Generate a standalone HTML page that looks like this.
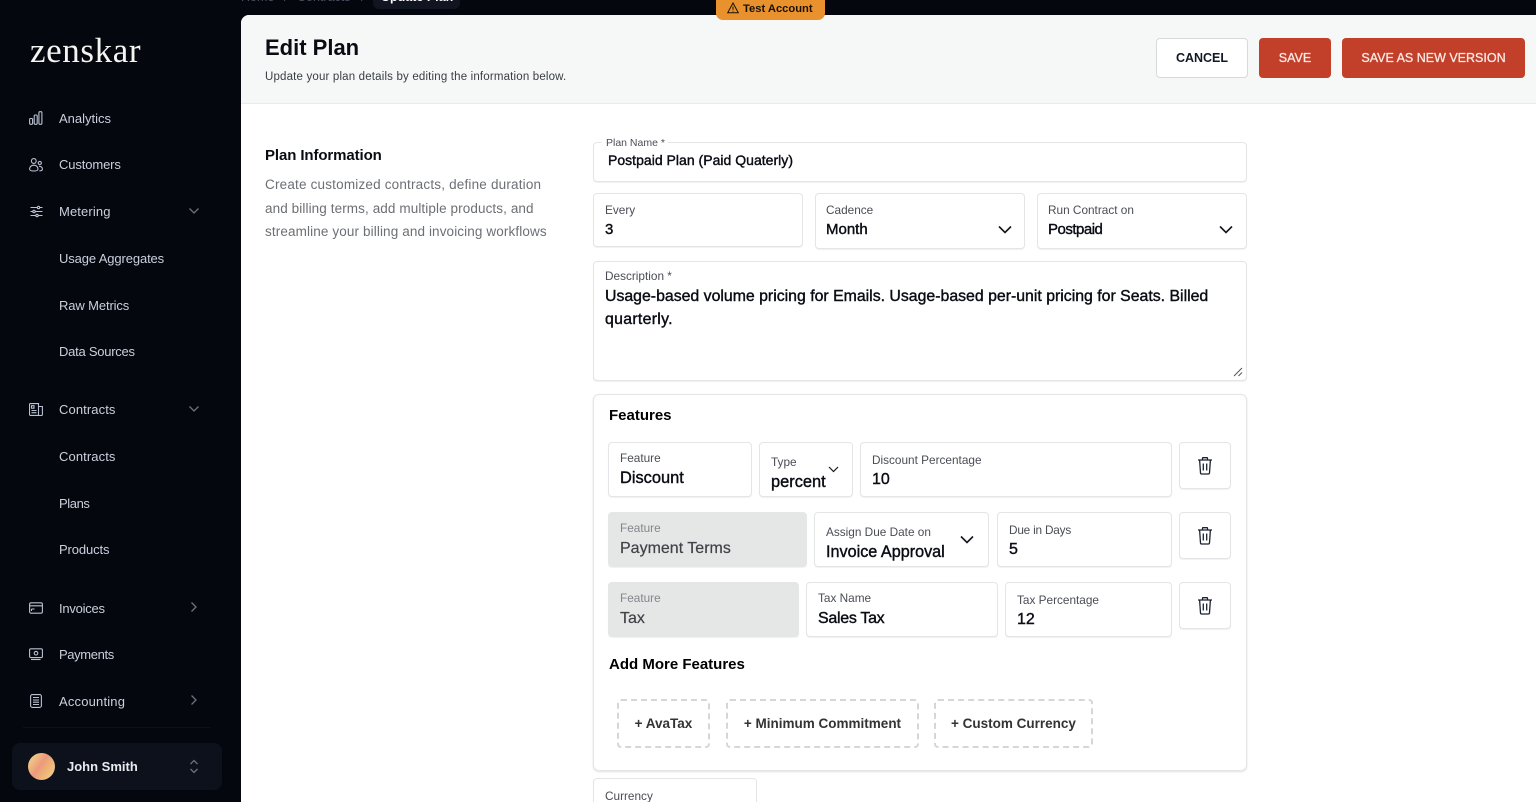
<!DOCTYPE html>
<html lang="en"><head><meta charset="utf-8"><title>Edit Plan</title>
<style>
*{box-sizing:border-box;margin:0;padding:0}
html,body{width:1536px;height:802px;overflow:hidden;background:#05070f;font-family:"Liberation Sans",sans-serif}
#r{position:relative;width:1536px;height:802px;overflow:hidden}
.a{position:absolute}
.t{position:absolute;white-space:nowrap;line-height:20px;height:20px}
.n{color:#c9d0dc;font-size:13px;letter-spacing:-.12px}
.l{color:#4a4d55;font-size:11.800px;letter-spacing:0}
.v{color:#0a0c14;font-size:15px;-webkit-text-stroke:.4px #0a0c14}
.b{position:absolute;background:#fff;border:1.500px solid #e3e5e6;border-radius:4px;box-shadow:0 1px 1px rgba(0,0,0,.06)}
.g{background:#e5e7e7;border-color:#e5e7e7}
.h{color:#000;font-size:15px;font-weight:bold}
.d{position:absolute;border:2.500px dashed #d6d6d6;border-radius:4px;height:49px;top:699px}
.dt{color:#333;font-size:13.500px;font-weight:bold}
svg{position:absolute;fill:none}
.i{stroke:#b9c2d0;stroke-width:1.100}
.c{stroke:#6b7280;stroke-width:1.300}
.k{stroke:#14161d;stroke-width:1.600}
.tr{stroke:#1c2230;stroke-width:1.300}
</style></head><body><div id="r">

<div class="t" style="left:30px;top:36px;height:30px;line-height:30px;font-family:'Liberation Serif',serif;font-size:35px;color:#f4f4f1;letter-spacing:.6px">zenskar</div>

<svg class="i" style="left:29px;top:111px" width="14" height="14" viewBox="0 0 14 14"><rect x=".6" y="7.500" width="3" height="5.800" rx="1"/><rect x="5.200" y="4" width="3" height="9.300" rx="1"/><rect x="9.900" y=".7" width="3" height="12.600" rx="1"/></svg>
<div class="t n" style="left:59px;top:109px;letter-spacing:0">Analytics</div>

<svg class="i" style="left:29px;top:158px" width="14" height="14" viewBox="0 0 14 14"><circle cx="4.800" cy="3" r="2.400"/><circle cx="10.800" cy="5" r="1.600"/><path d="M.6 11c0-2.400 2-3.800 4.200-3.800S9 8.600 9 11c0 1.500-1 2-4.200 2S.6 12.500.6 11zM10 8.300c2 0 3.400 1 3.400 2.800 0 1.200-1 1.700-3 1.700"/></svg>
<div class="t n" style="left:59px;top:155px">Customers</div>

<svg class="i" style="left:30px;top:205px" width="13" height="13" viewBox="0 0 13 13"><path d="M.5 2.500h12M.5 6.500h12M.5 10.500h12"/><circle cx="8.500" cy="2.500" r="1.200" fill="#05070f"/><circle cx="4" cy="6.500" r="1.200" fill="#05070f"/><circle cx="7" cy="10.500" r="1.200" fill="#05070f"/></svg>
<div class="t n" style="left:59px;top:202px;letter-spacing:.12px">Metering</div>
<svg class="c" style="left:189px;top:208px" width="10" height="6" viewBox="0 0 10 6"><path d="M.5.500 5 5 9.500.500"/></svg>

<div class="t n" style="left:59px;top:249px">Usage Aggregates</div>
<div class="t n" style="left:59px;top:296px">Raw Metrics</div>
<div class="t n" style="left:59px;top:342px;letter-spacing:-.25px">Data Sources</div>

<svg class="i" style="left:29px;top:403px" width="14" height="13" viewBox="0 0 14 13"><path d="M1.500.6h8v11.800h-8a1 1 0 0 1-1-1V1.600a1 1 0 0 1 1-1zM9.500 3.500h3.900v8a1 1 0 0 1-1 1H9.500M2.500 7.500h5M2.500 9.700h5"/><rect x="2.500" y="2.700" width="2.500" height="2.500"/></svg>
<div class="t n" style="left:59px;top:400px;letter-spacing:.1px">Contracts</div>
<svg class="c" style="left:189px;top:406px" width="10" height="6" viewBox="0 0 10 6"><path d="M.5.500 5 5 9.500.500"/></svg>

<div class="t n" style="left:59px;top:447px;letter-spacing:.1px">Contracts</div>
<div class="t n" style="left:59px;top:494px;letter-spacing:-.4px">Plans</div>
<div class="t n" style="left:59px;top:540px">Products</div>

<svg class="i" style="left:29px;top:602px" width="14" height="12" viewBox="0 0 14 12"><rect x=".6" y=".8" width="12.800" height="10.400" rx="1.500"/><path d="M.6 3.800h12.800M2.500 7h3M2.500 7v2"/></svg>
<div class="t n" style="left:59px;top:599px;letter-spacing:-.25px">Invoices</div>
<svg class="c" style="left:191px;top:602px" width="6" height="10" viewBox="0 0 6 10"><path d="M.5.500 5 5 .5 9.500"/></svg>

<svg class="i" style="left:29px;top:648px" width="14" height="13" viewBox="0 0 14 13"><rect x=".6" y=".8" width="12.800" height="8.800" rx="1.200"/><circle cx="7" cy="5.200" r="1.800"/><path d="M2 11.500h9.500"/></svg>
<div class="t n" style="left:59px;top:645px;letter-spacing:-.37px">Payments</div>

<svg class="i" style="left:30px;top:694px" width="12" height="14" viewBox="0 0 12 14"><rect x=".6" y=".6" width="10.800" height="12.800" rx="1.800"/><path d="M3 3.500h6M3 6h6M3 8.200h6M3 10.500h6"/></svg>
<div class="t n" style="left:59px;top:692px;letter-spacing:.18px">Accounting</div>
<svg class="c" style="left:191px;top:695px" width="6" height="10" viewBox="0 0 6 10"><path d="M.5.500 5 5 .5 9.500"/></svg>

<div class="a" style="left:23px;top:727px;width:188px;height:1px;background:#0d1119"></div>
<div class="a" style="left:12px;top:743px;width:210px;height:47px;background:#0c111c;border-radius:8px"></div>
<div class="a" style="left:28px;top:753px;width:27px;height:27px;border-radius:50%;background:linear-gradient(125deg,#f3d887 5%,#ec9a7c 45%,#eeb276 65%,#f2d08a 95%)"></div>
<div class="t" style="left:67px;top:757px;color:#e9ebef;font-size:13px;font-weight:bold">John Smith</div>
<svg class="c" style="left:189px;top:759px" width="10" height="15" viewBox="0 0 10 15"><path d="M1.500 5 5 1.500 8.500 5M1.500 10 5 13.500 8.500 10"/></svg>

<div class="t" style="left:241px;top:-13px;font-size:12.500px;color:#4a5060">Home</div>
<div class="t" style="left:284px;top:-13px;font-size:12.500px;color:#4a5060">/</div>
<div class="t" style="left:297px;top:-13px;font-size:12.500px;color:#4a5060">Contracts</div>
<div class="t" style="left:361px;top:-13px;font-size:12.500px;color:#4a5060">/</div>
<div class="a" style="left:373px;top:-10px;width:87px;height:19px;background:#101521;border-radius:6px"></div>
<div class="t" style="left:381px;top:-13px;font-size:12.500px;color:#fff;font-weight:bold">Update Plan</div>

<div class="a" style="left:241px;top:15px;width:1295px;height:787px;background:#fff;border-radius:8px 0 0 0"></div>
<div class="a" style="left:241px;top:15px;width:1295px;height:89px;background:#f5f8f7;border-bottom:1px solid #e9ebeb;border-radius:8px 0 0 0"></div>

<div class="a" style="left:716px;top:0;width:109px;height:20px;background:#e8912d;border-radius:0 0 7px 7px"></div>
<svg style="left:727px;top:2px;stroke:#1a1206;stroke-width:1" width="12" height="12" viewBox="0 0 12 12"><path d="M6 1 11.300 10.800H.7zM6 4.500v3.300M6 8.800v.8"/></svg>
<div class="t" style="left:743px;top:-1px;font-size:11.200px;font-weight:bold;color:#1a1206">Test Account</div>

<div class="t" style="left:265px;top:33px;height:30px;line-height:30px;font-size:22px;font-weight:bold;color:#0a0c14">Edit Plan</div>
<div class="t" style="left:265px;top:67px;font-size:11.500px;color:#3a3d45;letter-spacing:.17px">Update your plan details by editing the information below.</div>

<div class="a" style="left:1156px;top:38px;width:92px;height:40px;background:#fff;border:1px solid #d6dadc;border-radius:4px"></div>
<div class="t" style="left:1156px;width:92px;text-align:center;top:48px;font-size:12.500px;font-weight:bold;color:#111827">CANCEL</div>
<div class="a" style="left:1259px;top:38px;width:72px;height:40px;background:#c23f2a;border-radius:4px"></div>
<div class="t" style="left:1259px;width:72px;text-align:center;top:48px;font-size:12.500px;color:#fbe9e4;-webkit-text-stroke:.3px #fbe9e4">SAVE</div>
<div class="a" style="left:1342px;top:38px;width:183px;height:40px;background:#c23f2a;border-radius:4px"></div>
<div class="t" style="left:1342px;width:183px;text-align:center;top:48px;font-size:12.500px;color:#fbe9e4;-webkit-text-stroke:.3px #fbe9e4">SAVE AS NEW VERSION</div>

<div class="t" style="left:265px;top:146px;font-size:15px;font-weight:bold;color:#0a0c14;letter-spacing:-.1px">Plan Information</div>
<div class="t" style="left:265px;top:175px;font-size:13.500px;color:#6c6f74;letter-spacing:.19px">Create customized contracts, define duration</div>
<div class="t" style="left:265px;top:199px;font-size:13.500px;color:#6c6f74;letter-spacing:.1px">and billing terms, add multiple products, and</div>
<div class="t" style="left:265px;top:222px;font-size:13.500px;color:#6c6f74;letter-spacing:.12px">streamline your billing and invoicing workflows</div>

<div class="b" style="left:593px;top:142px;width:654px;height:40px"></div>
<div class="a" style="left:602px;top:139px;width:66px;height:6px;background:#fff"></div>
<div class="t" style="left:606px;top:133px;font-size:10.500px;color:#4a4d55">Plan Name *</div>
<div class="t v" style="left:608px;top:150px;font-size:14px;letter-spacing:.02px">Postpaid Plan (Paid Quaterly)</div>

<div class="b" style="left:593px;top:193px;width:210px;height:54px"></div>
<div class="t l" style="left:605px;top:200px">Every</div>
<div class="t v" style="left:605px;top:220px">3</div>

<div class="b" style="left:815px;top:193px;width:210px;height:56px"></div>
<div class="t l" style="left:826px;top:200px">Cadence</div>
<div class="t v" style="left:826px;top:220px">Month</div>
<svg class="k" style="left:998px;top:225px" width="14" height="9" viewBox="0 0 14 9"><path d="M1 1.500 7 7.500 13 1.500"/></svg>

<div class="b" style="left:1037px;top:193px;width:210px;height:56px"></div>
<div class="t l" style="left:1048px;top:200px">Run Contract on</div>
<div class="t v" style="left:1048px;top:220px;letter-spacing:-.5px">Postpaid</div>
<svg class="k" style="left:1219px;top:225px" width="14" height="9" viewBox="0 0 14 9"><path d="M1 1.500 7 7.500 13 1.500"/></svg>

<div class="b" style="left:593px;top:261px;width:654px;height:120px"></div>
<div class="t l" style="left:605px;top:266px">Description *</div>
<div class="t v" style="left:605px;top:287px;font-size:15.850px">Usage-based volume pricing for Emails. Usage-based per-unit pricing for Seats. Billed</div>
<div class="t v" style="left:605px;top:310px;font-size:15.850px;letter-spacing:.3px">quarterly.</div>
<svg style="left:1233px;top:367px;stroke:#555;stroke-width:1" width="10" height="10" viewBox="0 0 10 10"><path d="M1 9 9 1M5.500 9 9 5.500"/></svg>

<div class="b" style="left:593px;top:394px;width:654px;height:377px;border-radius:6px;box-shadow:0 1px 2px rgba(0,0,0,.12)"></div>
<div class="t h" style="left:609px;top:406px">Features</div>

<div class="b" style="left:608px;top:442px;width:144px;height:55px"></div>
<div class="t l" style="left:620px;top:448px">Feature</div>
<div class="t v" style="left:620px;top:468px;font-size:16.400px">Discount</div>
<div class="b" style="left:759px;top:442px;width:94px;height:55px"></div>
<div class="t l" style="left:771px;top:452px">Type</div>
<div class="t v" style="left:771px;top:472px;font-size:16.400px">percent</div>
<svg style="left:828px;top:466px;stroke:#14161d;stroke-width:1.200" width="11" height="7" viewBox="0 0 11 7"><path d="M1 1 5.500 5.500 10 1"/></svg>
<div class="b" style="left:860px;top:442px;width:312px;height:55px"></div>
<div class="t l" style="left:872px;top:450px">Discount Percentage</div>
<div class="t v" style="left:872px;top:470px;font-size:16px">10</div>
<div class="b" style="left:1179px;top:442px;width:52px;height:47px"></div>
<svg class="tr" style="left:1197px;top:457px" width="16" height="18" viewBox="0 0 16 18"><path d="M1 3h14M5.500 3V1.200a.5.5 0 0 1 .5-.5h4a.5.5 0 0 1 .5.5V3M2.600 3l.9 12.800a1.300 1.300 0 0 0 1.300 1.200h6.400a1.300 1.300 0 0 0 1.300-1.200L13.400 3M6.300 6.500v7M9.700 6.500v7"/></svg>

<div class="b g" style="left:608px;top:512px;width:199px;height:55px"></div>
<div class="t l" style="left:620px;top:518px;color:#83868a">Feature</div>
<div class="t v" style="left:620px;top:539px;font-size:16px;color:#3f4347;-webkit-text-stroke:.2px #3f4347">Payment Terms</div>
<div class="b" style="left:814px;top:512px;width:175px;height:55px"></div>
<div class="t l" style="left:826px;top:522px">Assign Due Date on</div>
<div class="t v" style="left:826px;top:542px;font-size:16.200px">Invoice Approval</div>
<svg class="k" style="left:960px;top:535px" width="14" height="9" viewBox="0 0 14 9"><path d="M1 1.500 7 7.500 13 1.500"/></svg>
<div class="b" style="left:997px;top:512px;width:175px;height:55px"></div>
<div class="t l" style="left:1009px;top:520px;letter-spacing:-.2px">Due in Days</div>
<div class="t v" style="left:1009px;top:540px;font-size:16px">5</div>
<div class="b" style="left:1179px;top:512px;width:52px;height:47px"></div>
<svg class="tr" style="left:1197px;top:527px" width="16" height="18" viewBox="0 0 16 18"><path d="M1 3h14M5.500 3V1.200a.5.5 0 0 1 .5-.5h4a.5.5 0 0 1 .5.5V3M2.600 3l.9 12.800a1.300 1.300 0 0 0 1.300 1.200h6.400a1.300 1.300 0 0 0 1.300-1.200L13.400 3M6.300 6.500v7M9.700 6.500v7"/></svg>

<div class="b g" style="left:608px;top:582px;width:191px;height:55px"></div>
<div class="t l" style="left:620px;top:588px;color:#83868a">Feature</div>
<div class="t v" style="left:620px;top:609px;font-size:16px;color:#3f4347;-webkit-text-stroke:.2px #3f4347">Tax</div>
<div class="b" style="left:806px;top:582px;width:192px;height:55px"></div>
<div class="t l" style="left:818px;top:588px">Tax Name</div>
<div class="t v" style="left:818px;top:609px;font-size:16px;letter-spacing:-.3px">Sales Tax</div>
<div class="b" style="left:1005px;top:582px;width:167px;height:55px"></div>
<div class="t l" style="left:1017px;top:590px">Tax Percentage</div>
<div class="t v" style="left:1017px;top:610px;font-size:16px">12</div>
<div class="b" style="left:1179px;top:582px;width:52px;height:47px"></div>
<svg class="tr" style="left:1197px;top:597px" width="16" height="18" viewBox="0 0 16 18"><path d="M1 3h14M5.500 3V1.200a.5.5 0 0 1 .5-.5h4a.5.5 0 0 1 .5.5V3M2.600 3l.9 12.800a1.300 1.300 0 0 0 1.300 1.200h6.400a1.300 1.300 0 0 0 1.300-1.200L13.400 3M6.300 6.500v7M9.700 6.500v7"/></svg>

<div class="t h" style="left:609px;top:655px">Add More Features</div>
<div class="d" style="left:617px;width:93px"></div>
<div class="t dt" style="left:617px;width:93px;text-align:center;top:714px">+ AvaTax</div>
<div class="d" style="left:726px;width:193px"></div>
<div class="t dt" style="left:726px;width:193px;text-align:center;top:714px">+ Minimum Commitment</div>
<div class="d" style="left:934px;width:159px"></div>
<div class="t dt" style="left:934px;width:159px;text-align:center;top:714px">+ Custom Currency</div>

<div class="b" style="left:593px;top:778px;width:164px;height:50px"></div>
<div class="t l" style="left:605px;top:786px">Currency</div>
</div></body></html>
